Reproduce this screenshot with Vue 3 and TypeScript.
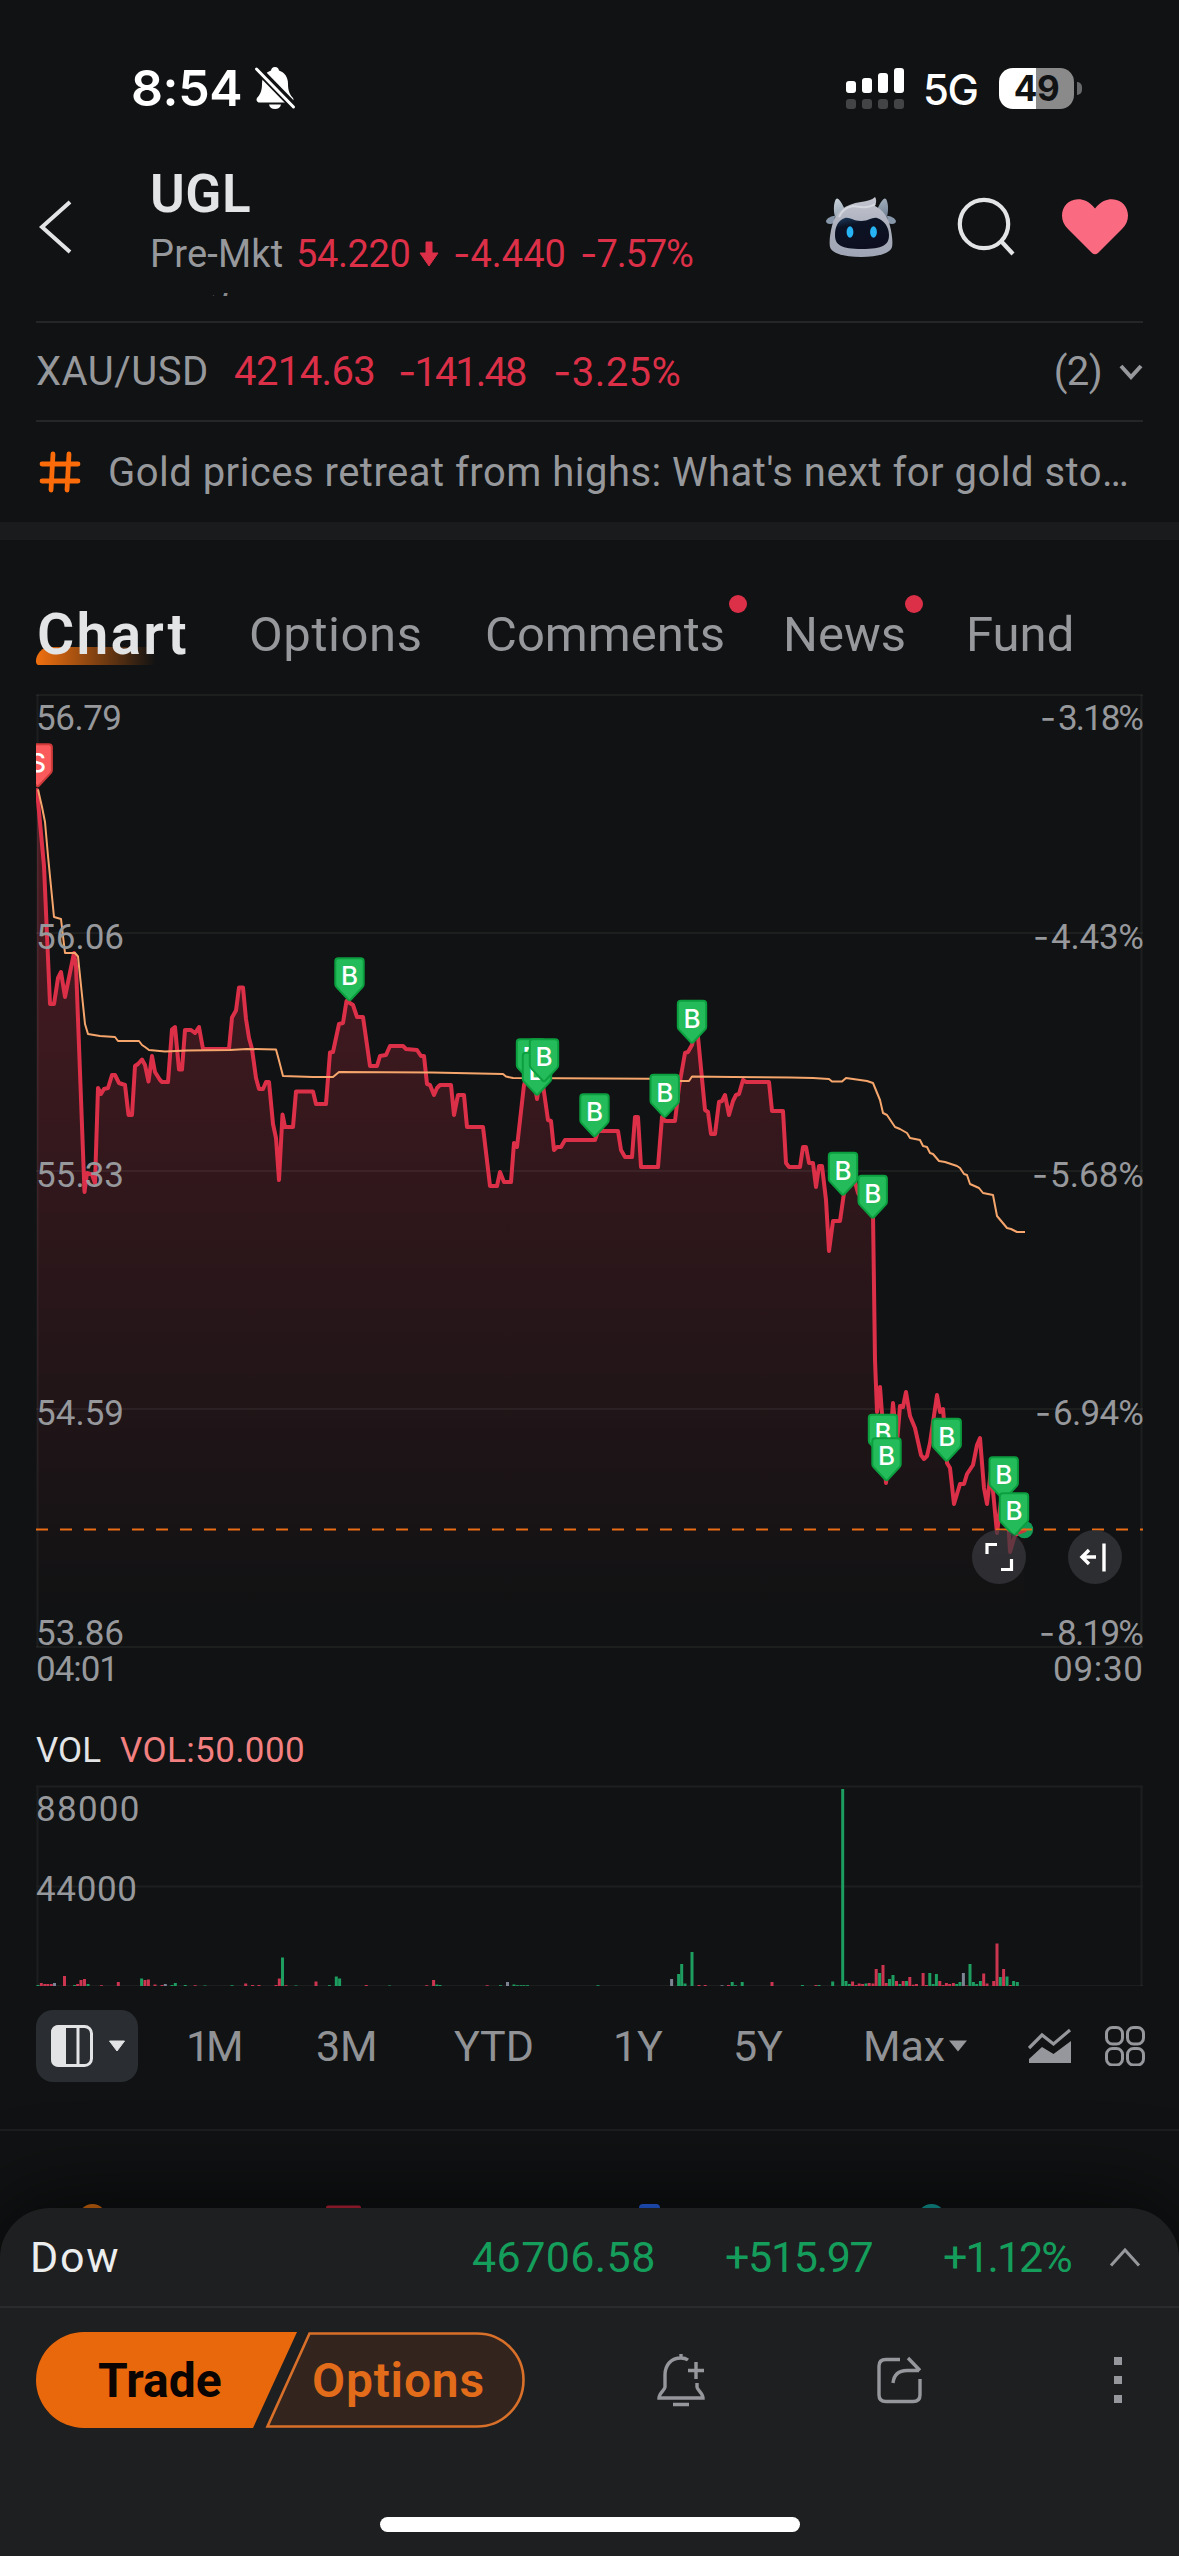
<script setup lang="ts">
import { h } from 'vue'

// Number text whose leading sign is set in a wider dash
const Num = (props: { v: string }) =>
  h('span', { class: 'num' }, props.v.startsWith('-') ? [h('span', { class: 'dash' }, '-'), props.v.slice(1)] : props.v)
Num.props = ['v']

const tabs = [
  { name: 'Chart', dot: 0, w: 213 },
  { name: 'Options', dot: 0, w: 236 },
  { name: 'Comments', dot: -22, w: 298 },
  { name: 'News', dot: -17, w: 183 },
  { name: 'Fund', dot: 0, w: 130 },
]

const price =
  '37,790 44,866 50,1004 54,1004 58,978 61,972 65,997 74,953 76,966 84.5,1192 87,1173 92,1174.5 95,1183 98,1088 101,1094 104,1089 108,1088 112,1075 115,1075 119,1083 125,1085 128.5,1115 132,1115 135,1066 138,1064 142,1059.5 145,1065 148.5,1081.5 152,1056 155,1072 160,1080 162,1082 168,1082 172,1029.5 175,1027 179,1069.5 182,1069.5 185,1030 191,1030 195,1033 199,1027 203,1049 229,1049 232,1017.5 236,1010.5 239,987.5 243,987.5 246,1019 249,1038 252,1049 256,1078 259,1089 263,1089 266,1082 269,1082 273,1124 276,1138 279,1180 282.5,1114.5 285,1127 293,1127 296,1091.5 313,1091.5 316,1104 326,1104 330,1052.5 333,1052 339,1024 343,1023 346.5,1001 353,1005 357,1017 363,1017 370,1066 377,1066 380,1056 386,1055 390,1046 403,1046 406,1049 417,1050 421,1056 424,1056 427,1084 430,1085 434,1095 437,1088 440,1085 451,1085 454,1115 458,1095 464,1095 467,1127 483,1127 490,1186 497,1186 500,1172 504,1182 511,1182 514,1143 517,1147 524,1085 528,1072 533,1073 537,1099 541,1073 544,1092 548,1120 551,1121 554,1150 557,1147 561,1147 565,1140 595,1140 598,1131 618,1131 621,1150 625,1157 632,1157 635,1117 638,1117 641,1167 658,1167 662,1117 665,1121 675,1121 679,1087 685,1053 688,1052 692,1045 695,1030 698,1037 705,1110 708,1112 711,1134 715,1134 719,1102 722,1101 725,1095 729,1115 733,1101 736,1095 739,1094 743,1080 746,1082 769,1082 772,1111 783,1111 786,1163 789,1167 800,1167 803,1147 806,1147 809,1163 813,1163 816,1187 819,1166 822,1166 826,1200 829,1251 833,1221 840,1221 844,1193 848,1180 855,1182 858,1193 863,1200 873,1213 875,1360 877,1412 880,1387 883,1427 886,1483 890,1443 893,1403 897,1443 900,1406 903,1407 906,1392 910,1416 915,1428 921,1455 924,1459 927,1456 930,1443 937,1395 940,1412 943,1409 946,1443 947,1463 950,1468 954,1504 960,1484 964,1484 967,1474 973,1465 977,1445 980,1438 984,1488 987,1504 991,1470 997,1533 1002,1493 1007,1500 1010,1552 1015,1535 1020,1533 1024,1530'
const area = `37,1647 ${price} 1024,1647`

const average =
  '38,789.5 42,807 45,822 48,856 54,917 61,919 65,953 75,953 78,956.5 85,1024 88,1034 100,1036 115,1037 118,1041 139,1041 142,1045 145,1047 149,1050 165,1051.5 187,1050.5 230,1050 247,1049 276,1049.5 279,1060.5 283,1076 313,1077 333,1077 339,1072 432,1072.5 503,1074 506,1076.5 513,1078 650,1078.7 679,1081 689,1081 692,1076.5 733,1077 790,1077.5 813,1078 829,1079 832,1081.5 842,1081.5 846,1078 867,1081 873,1083 880,1100 883,1113 887,1115 895,1127 900,1129 907,1133 910,1138 920,1140 923,1146 927,1147 930,1153 933,1154 939,1161 945,1162 957,1166 960,1168 964,1174 967,1175 970,1184 979,1188 983,1193 993,1195 997,1216 1007,1228 1011,1229 1017,1232 1025,1232'

const grid = [695, 933, 1171, 1409, 1647]

const leftLabels = [
  { t: '56.79', y: 729.5, w: 86 },
  { t: '56.06', y: 949, w: 88 },
  { t: '55.33', y: 1187, w: 88 },
  { t: '54.59', y: 1425, w: 88 },
  { t: '53.86', y: 1645, w: 88 },
  { t: '04:01', y: 1681, w: 83 },
]
const rightLabels = [
  { t: '3.18%', y: 729.5, x: 1058 },
  { t: '4.43%', y: 949, x: 1051 },
  { t: '5.68%', y: 1187, x: 1050 },
  { t: '6.94%', y: 1425, x: 1053 },
  { t: '8.19%', y: 1645, x: 1057 },
]

const markers: [number, number][] = [
  [349.5, 957.5], [531, 1038.5], [537, 1052], [544, 1038.5], [594.5, 1093.5], [664.7, 1074], [692, 1000],
  [843, 1152], [872.7, 1175], [883, 1414], [886.5, 1437.5], [946.7, 1418], [1003.7, 1456.5], [1014, 1492.5],
]
const pin = 'M-11,0.8 H11 Q14.2,0.8 14.2,4 V26.5 Q14.2,28.4 13,29.6 L1.2,42.2 Q0,43.2 -1.2,42.2 L-13,29.6 Q-14.2,28.4 -14.2,26.5 V4 Q-14.2,0.8 -11,0.8 Z'

type Bar = [number, number, 'r' | 'g' | 'n']
const volume: Bar[] = [
  [38, 1, 'g'], [41.3, 3, 'r'], [44.8, 2, 'r'], [47.8, 2, 'r'], [51.3, 2, 'r'], [54.5, 3, 'n'], [64.5, 10, 'r'], [74.6, 1, 'g'],
  [77.7, 2, 'r'], [81, 6, 'r'], [84.5, 7, 'r'], [88, 2, 'g'], [101.4, 0.8, 'r'], [118.3, 4, 'r'], [141.6, 7.5, 'g'], [145, 6, 'r'],
  [148.4, 6.5, 'r'], [155, 1.5, 'r'], [162, 1, 'r'], [165.3, 2, 'n'], [172, 1, 'g'], [175.3, 3, 'g'], [185.3, 1, 'g'], [195.2, 0.8, 'r'],
  [205, 0.5, 'g'], [232, 0.8, 'g'], [245.7, 2.5, 'r'], [252.6, 1, 'r'], [259, 1, 'r'], [276, 1, 'r'], [279.3, 7.5, 'r'], [282.5, 28.5, 'g'],
  [286, 0.8, 'r'], [296, 0.5, 'g'], [316, 4.5, 'r'], [329.5, 0.8, 'g'], [336.3, 9.5, 'g'], [339.6, 7.5, 'g'], [366.3, 1, 'r'],
  [389.6, 0.5, 'g'], [426.7, 0.8, 'r'], [433.6, 6, 'r'], [436.8, 1.4, 'g'], [440, 1, 'g'], [487.2, 0.8, 'r'], [500.5, 0.8, 'g'],
  [507.5, 4, 'n'], [514, 1.5, 'g'], [517.4, 0.8, 'g'], [521, 0.8, 'g'], [524, 0.8, 'g'], [527.5, 0.8, 'g'], [598, 0.8, 'g'],
  [671.6, 7, 'n'], [678.6, 12, 'g'], [681.7, 22, 'g'], [685, 2.5, 'g'], [692, 34, 'g'], [699, 1, 'r'], [705.2, 1, 'r'], [722, 0.7, 'n'],
  [728.5, 1, 'r'], [732.2, 4, 'g'], [735.5, 0.8, 'g'], [742.2, 4, 'g'], [772, 4, 'r'], [802.4, 1, 'g'], [816, 1, 'r'], [819, 1, 'g'],
  [832.7, 4.5, 'g'], [842.7, 197, 'g'], [846, 5, 'g'], [849.3, 2, 'g'], [852.6, 4.5, 'r'], [856, 1, 'r'], [859.2, 2.5, 'r'], [862.6, 2, 'r'],
  [866, 2.5, 'g'], [869.2, 3, 'r'], [873, 2.5, 'r'], [876.2, 17, 'r'], [879.6, 13, 'g'], [883, 21, 'r'], [886.2, 3, 'r'], [889.5, 7, 'g'],
  [893, 11, 'g'], [896.5, 5, 'r'], [899.9, 2, 'g'], [903.2, 5, 'r'], [906.5, 5, 'g'], [909.8, 9, 'r'], [913.2, 1.3, 'r'], [916.5, 2, 'r'],
  [923.1, 13, 'r'], [926.5, 1, 'r'], [929.8, 13, 'g'], [933.1, 2, 'g'], [936.4, 12, 'g'], [939.8, 5, 'r'], [943.1, 1, 'r'], [946.4, 3, 'r'],
  [949.7, 2, 'r'], [953.4, 3, 'r'], [956.7, 2, 'g'], [960, 4, 'g'], [963.4, 13, 'n'], [966.7, 0.6, 'r'], [970, 22, 'g'], [973.4, 4, 'g'],
  [976.7, 2, 'g'], [980.4, 5, 'g'], [983.7, 12.5, 'r'], [987, 2.5, 'r'], [993.7, 5, 'r'], [997, 42.5, 'r'], [1000.3, 9, 'g'],
  [1003.6, 17, 'r'], [1007, 9.5, 'g'], [1010.3, 1, 'r'], [1013.6, 5, 'g'], [1017.3, 4, 'g'],
]

const ranges = [
  { t: '1M', x: 186 },
  { t: '3M', x: 316 },
  { t: 'YTD', x: 454 },
  { t: '1Y', x: 613 },
  { t: '5Y', x: 733 },
]
const signal = [12, 15, 20, 25]
</script>

<template>
  <div class="screen">
    <div class="status">
      <span class="clock">8:54</span>
      <svg class="mute" width="42" height="44" viewBox="0 0 42 44">
        <path d="M21 1 C23.5 1 24.6 2.4 25 4.6 C31 6.8 34 11.5 34 18 C34 25 36 29 39 32 C40.2 34 39 36.5 36.5 36.5 H5.5 C3 36.5 1.8 34 3 32 C6 29 8 25 8 18 C8 11.5 11 6.8 17 4.6 C17.4 2.4 18.5 1 21 1 Z M15 38.5 H27 C26.5 41.5 24 43 21 43 C18 43 15.5 41.5 15 38.5 Z" fill="#fff" />
        <path d="M3.5 3 L40.5 41" stroke="#101213" stroke-width="8" />
        <path d="M2.5 3 L39.5 41" stroke="#fff" stroke-width="3" stroke-linecap="round" />
      </svg>
      <div class="signal">
        <div v-for="s in signal" :key="s" class="sig">
          <i class="bar" :style="{ height: s + 'px' }"></i><i class="nub"></i>
        </div>
      </div>
      <span class="net">5G</span>
      <div class="battery">49</div>
      <i class="cap"></i>
    </div>

    <header class="head">
      <svg class="back" width="36" height="54" viewBox="0 0 36 54"><path d="M33 2 L5 27 L33 52" fill="none" stroke="#e3e4e6" stroke-width="4" /></svg>
      <div class="title">
        <h1>UGL</h1>
        <div class="quote">
          <span class="mkt">Pre-Mkt</span>
          <Num v="54.220" class="q1" />
          <svg class="down" width="20" height="26" viewBox="0 0 20 26"><path d="M7 1 H13 V12 H19 L10 25 L1 12 H7 Z" fill="#dc2f48" stroke="#dc2f48" stroke-linejoin="round" /></svg>
          <Num v="-4.440" class="q2" />
          <Num v="-7.57%" class="q3" />
        </div>
      </div>
      <svg class="robot" width="72" height="62" viewBox="0 0 72 62">
        <defs>
          <linearGradient id="shell" x1="0" y1="0" x2="0" y2="1"><stop offset="0" stop-color="#c3c6d0" /><stop offset=".55" stop-color="#a9adba" /><stop offset="1" stop-color="#9fa5b5" /></linearGradient>
          <linearGradient id="horn" x1="0" y1="0" x2="1" y2="1"><stop offset="0" stop-color="#c9d3dc" /><stop offset="1" stop-color="#6f7f92" /></linearGradient>
          <linearGradient id="visor" x1="0" y1="0" x2=".4" y2="1"><stop offset="0" stop-color="#1f3f62" /><stop offset=".3" stop-color="#0c1324" /><stop offset="1" stop-color="#0d0f20" /></linearGradient>
        </defs>
        <path d="M11 3 C13 1 16 5 20 14 L10 21 C8 13 9 6 11 3 Z M61 3 C59 1 56 5 52 14 L62 21 C64 13 63 6 61 3 Z" fill="url(#horn)" />
        <path d="M10 20 C6 20 2 22 1 25 C1 28 5 29 9 27 Z M62 20 C66 20 70 22 71 25 C71 28 67 29 63 27 Z" fill="#8797a9" />
        <path d="M36 6 C42 5 47 4 50 1 C52 4 51 8 50 10 C58 14 63 21 65 30 C67 38 68 46 67 51 C65 58 51 61 36 61 C21 61 7 58 5 51 C4 46 5 38 7 30 C10 16 20 8 36 6 Z" fill="url(#shell)" />
        <path d="M28 10 C38 12 46 11 50 8 M14 21 C17 14 22 11 28 10" fill="none" stroke="#dfe2e8" stroke-width="2" opacity=".7" />
        <path d="M20 22 C25 21 28 25 36 25 C44 25 47 21 52 22 C59 24 64 31 64 39 C64 49 58 53 37 53 C16 53 10 49 10 39 C10 31 13 24 20 22 Z" fill="url(#visor)" />
        <ellipse cx="25" cy="36" rx="3.4" ry="5.8" fill="#27b4f5" /><ellipse cx="48.5" cy="36" rx="3.4" ry="5.8" fill="#27b4f5" />
      </svg>
      <svg class="search" width="60" height="62" viewBox="0 0 60 62"><circle cx="28" cy="28" r="24.2" fill="none" stroke="#e3e4e6" stroke-width="4.2" /><path d="M44.5 44.5 L57 58" stroke="#e3e4e6" stroke-width="4.2" /></svg>
      <svg class="heart" width="68" height="58" viewBox="0 0 68 58"><path d="M34 10.5 C28 2.5 21 1 17 1.2 C7 1.5 1 9 1 17.5 C1 23 3 27 7 31 L31 55 Q34 57.5 37 55 L61 31 C65 27 67 23 67 17.5 C67 9 61 1.5 51 1.2 C47 1 40 2.5 34 10.5 Z" fill="#fa6a80" /></svg>
    </header>

    <div class="peek"><span class="p0">Pre-Closing</span><span class="p1">54.220</span><span class="p2">4.440</span><span class="p3">7.57%</span><span class="p4">08:54 ET</span></div>
    <div class="row xau">
      <span>XAU/USD</span>
      <Num v="4214.63" class="x1" />
      <Num v="-141.48" class="x2" />
      <Num v="-3.25%" class="x3" />
      <span class="count">(2)</span>
      <svg width="24" height="16" viewBox="0 0 24 16"><path d="M2 2 L12 13 L22 2" fill="none" stroke="#96989c" stroke-width="4" /></svg>
    </div>
    <div class="row topic">
      <svg width="42" height="42" viewBox="0 0 42 42"><path d="M14 3 L12 39 M30 3 L28 39 M3 13 H39 M3 30 H39" fill="none" stroke="#fb6b0a" stroke-width="4.8" stroke-linecap="round" /></svg>
      <span>Gold prices retreat from highs: What's next for gold sto…</span>
    </div>
    <div class="band"></div>

    <nav class="tabs">
      <div v-for="(t, i) in tabs" :key="t.name" class="tab" :class="{ on: i === 0 }" :style="{ width: t.w + 'px' }">
        <span>{{ t.name }}<i v-if="t.dot" class="dot" :style="{ right: t.dot + 'px' }"></i></span>
      </div>
    </nav>

    <svg class="chart" width="1179" height="1031" viewBox="0 694 1179 1031">
      <defs>
        <linearGradient id="fill" gradientUnits="userSpaceOnUse" x1="0" y1="790" x2="0" y2="1625"><stop offset="0" stop-color="#de3249" stop-opacity=".3" /><stop offset="1" stop-color="#de3249" stop-opacity="0" /></linearGradient>
        <clipPath id="plot"><rect x="36" y="694" width="1107" height="960" /></clipPath>
      </defs>
      <polygon :points="area" fill="url(#fill)" />
      <g stroke="#fff" stroke-opacity=".055" stroke-width="2">
        <path v-for="y in grid" :key="y" :d="`M36 ${y} H1143`" />
        <path d="M37.5 695 V1647 M1141.5 695 V1647" />
      </g>
      <g clip-path="url(#plot)">
        <polyline :points="price" fill="none" stroke="#dc3049" stroke-width="4" stroke-linejoin="round" stroke-linecap="round" />
        <polyline :points="average" fill="none" stroke="#f6a66c" stroke-width="2" stroke-linejoin="round" />
      </g>
      <g class="axis">
        <text v-for="l in leftLabels" :key="l.t" x="36" :y="l.y" :textLength="l.w">{{ l.t }}</text>
        <g v-for="l in rightLabels" :key="l.t">
          <text :x="l.x - 18" :y="l.y" class="dash">-</text>
          <text :x="l.x" :y="l.y" :textLength="1144 - l.x">{{ l.t }}</text>
        </g>
        <text x="1053" y="1681" textLength="90">09:30</text>
      </g>
      <circle cx="1024.5" cy="1529.5" r="8.7" fill="#139c55" />
      <path d="M1018 1533 L1026 1530" stroke="#c23b3f" stroke-width="4" />
      <path d="M36 1529.5 H1143" stroke="#ea6c14" stroke-width="2.2" stroke-dasharray="12 12" />
      <g clip-path="url(#plot)" class="pins">
        <g transform="translate(37.7 743.5)"><path :d="pin" fill="#fa5a5c" stroke="#cf3a3a" stroke-width="2" /><text y="28">S</text></g>
        <g v-for="(m, i) in markers" :key="i" :transform="`translate(${m[0]} ${m[1]})`"><path :d="pin" fill="#24bb5b" stroke="#0c9f3f" stroke-width="2" /><text y="27.5">B</text></g>
      </g>
      <g>
        <circle cx="999" cy="1557" r="27" fill="#39393e" fill-opacity=".72" />
        <path d="M987 1554 V1544.5 H997 M1001 1569.5 H1011.5 V1559" fill="none" stroke="#fff" stroke-width="3.2" />
        <circle cx="1095" cy="1557" r="27" fill="#39393e" fill-opacity=".72" />
        <path d="M1096 1557 H1082 M1089 1550 L1082 1557 L1089 1564 M1104 1543.5 V1571.5" fill="none" stroke="#fff" stroke-width="3.4" />
      </g>
    </svg>

    <div class="legend"><span>VOL</span><span class="v">VOL:50.000</span></div>

    <svg class="chart" width="1179" height="214" viewBox="0 1776 1179 214">
      <g stroke="#fff" stroke-opacity=".055" stroke-width="2"><path d="M36 1786.5 H1143 M36 1886.5 H1143 M37.5 1786 V1986 M1141.5 1786 V1986" /><path d="M36 1985.5 H1143" stroke-width="1" /></g>
      <rect v-for="(b, i) in volume" :key="i" :x="b[0] - 1.5" :y="1986 - b[1]" width="3" :height="b[1]" :class="'bar-' + b[2]" />
      <g class="axis"><text x="36" y="1821" textLength="103.5">88000</text><text x="36" y="1901" textLength="101">44000</text></g>
    </svg>

    <div class="tools">
      <div class="mode">
        <svg width="42" height="42" viewBox="0 0 42 42"><path d="M8 0 H15 V42 H8 Q0 42 0 34 V8 Q0 0 8 0 Z" fill="#e3e4e6" /><rect x="1.5" y="1.5" width="39" height="39" rx="7" fill="none" stroke="#e3e4e6" stroke-width="3" /><path d="M27 1 V41" stroke="#e3e4e6" stroke-width="3" /></svg>
        <svg width="18" height="12" viewBox="0 0 18 12"><path d="M1.5 1 H16.5 L9 11 Z" fill="#e3e4e6" stroke="#e3e4e6" stroke-linejoin="round" /></svg>
      </div>
      <div class="ranges">
        <span v-for="(r, i) in ranges" :key="r.t" :style="{ width: (ranges[i + 1]?.x ?? 863) - r.x + 'px' }">{{ r.t }}</span>
        <span class="max">Max</span>
        <svg width="18" height="12" viewBox="0 0 18 12"><path d="M0 .5 H18 L9 11.5 Z" fill="#96989c" /></svg>
      </div>
      <svg class="areaicon" width="44" height="36" viewBox="0 0 44 36"><path d="M1 20 L14 7 L25.5 16 L42 2" fill="none" stroke="#96979c" stroke-width="3.2" /><path d="M1 35 V31 L14 19 L25.5 26 L43 13 V35 Z" fill="#96979c" /></svg>
      <svg width="40" height="40" viewBox="0 0 40 40" fill="none" stroke="#96979c" stroke-width="3"><rect x="1.5" y="1.5" width="16" height="16.5" rx="6" /><rect x="22.5" y="1.5" width="16" height="16.5" rx="6" /><rect x="1.5" y="22.5" width="16" height="16.5" rx="6" /><rect x="22.5" y="22.5" width="16" height="16.5" rx="6" /></svg>
    </div>

    <div class="below">
      <svg width="1179" height="77" viewBox="0 2131 1179 77">
        <circle cx="92.5" cy="2218" r="12" fill="none" stroke="#e87410" stroke-width="4" />
        <rect x="326" y="2205.5" width="35" height="12" rx="2" fill="#d0263f" />
        <rect x="639" y="2204" width="21" height="14" rx="4" fill="#2a6cff" />
        <circle cx="931.5" cy="2218" r="12" fill="none" stroke="#12aaa8" stroke-width="4" />
      </svg>
    </div>

    <footer class="sheet">
      <div class="index">
        <span class="name">Dow</span>
        <span class="i1">46706.58</span><span class="i2">+515.97</span><span class="i3">+1.12%</span>
        <svg width="32" height="20" viewBox="0 0 32 20"><path d="M2 18.5 L16 3 L30 18.5" fill="none" stroke="#96989c" stroke-width="3" /></svg>
      </div>
      <div class="actions">
        <div class="pill">
          <svg width="490" height="96" viewBox="0 0 490 96"><path d="M48 0 H261 L217 96 H48 A48 48 0 0 1 48 0 Z" fill="#ea680c" /><path d="M273.5 1.5 H441 A46.5 46.5 0 0 1 441 94.5 H231.5 Z" fill="#33251e" stroke="#d9702a" stroke-width="2.6" /></svg>
          <span class="trade">Trade</span><span class="opts">Options</span>
        </div>
        <svg class="bell" width="48" height="54" viewBox="0 0 48 54"><path d="M24 1 V5 M31 7 C29 5.5 26.5 5 24 5 C14 5 8 12 8 22 V34 C8 37 2 40 2 45 H46 C46 40 40 37 40 34 V30 M31 17.5 H47 M39 9 V26 M16 51.5 H32" fill="none" stroke="#96979c" stroke-width="3.4" /></svg>
        <svg class="share" width="48" height="50" viewBox="0 0 48 50"><path d="M24 4.5 H10 Q3 4.5 3 11 V40 Q3 46.5 10 46.5 H37 Q44 46.5 44 40 V24" fill="none" stroke="#96979c" stroke-width="3.4" /><path d="M17 28 C18 19 23 15.5 31 15.5 H43 M32 3 L44 15.5" fill="none" stroke="#96979c" stroke-width="3.4" /></svg>
        <div class="more"><i></i><i></i><i></i></div>
      </div>
      <div class="home"></div>
    </footer>
  </div>
</template>

<style scoped>
.screen { width: 1179px; height: 2556px; overflow: hidden; background: #101213; color: #96989c; font-family: Roboto, "Noto Sans", sans-serif; display: flex; flex-direction: column; white-space: nowrap; }
.screen > * { flex: none; }
svg { display: block; flex: none; }
h1 { margin: 0; }

.status { height: 176px; display: flex; align-items: center; color: #fff; font-family: Inter, sans-serif; }
.clock { margin-left: 131px; width: 123px; font-size: 50px; font-weight: 600; letter-spacing: -.4px; }
.signal { margin-left: 550px; display: flex; gap: 6px; align-items: flex-end; }
.sig { display: flex; flex-direction: column; gap: 6px; }
.bar { display: block; width: 10px; background: #fff; border-radius: 3px; }
.nub { display: block; width: 10px; height: 10px; background: #434446; border-radius: 3px; }
.net { margin-left: 19px; width: 76px; font-size: 42px; font-weight: 500; letter-spacing: -1.5px; padding-top: 2px; }
.battery { width: 75px; height: 41px; border-radius: 14px; background: linear-gradient(90deg, #fff 37px, #8a8a8b 37px); color: #101213; font-size: 35px; font-weight: 700; line-height: 41px; text-align: center; letter-spacing: -.5px; }
.cap { width: 5px; height: 13px; margin-left: 3px; background: #68696a; border-radius: 0 6px 6px 0; }

.head { height: 117px; padding-bottom: 15px; box-sizing: border-box; display: flex; align-items: center; }
.back { margin-left: 37px; }
.title { margin-left: 77px; width: 673px; margin-top: -7px; }
h1 { font-size: 53px; line-height: 62px; height: 60px; font-weight: 600; color: #e3e4e6; letter-spacing: .5px; }
.quote { display: flex; align-items: center; font-size: 38px; line-height: 60px; color: #dc2f48; }
.mkt { width: 146px; color: #96989c; letter-spacing: .2px; }
.q1 { width: 123px; letter-spacing: -.4px; }
.down { margin-right: 14px; }
.q2 { width: 127px; }
.q3 { letter-spacing: -1.1px; }
.robot { margin-left: 2px; }
.search { margin-left: 59px; }
.heart { margin-left: 45px; }

.peek { height: 28px; overflow: hidden; display: flex; font-size: 38px; line-height: 44px; }
.peek > span { margin-top: -35px; color: #88898c; height: 38px; overflow: hidden; box-sizing: border-box; }
.p0 { margin-left: 36px; width: 221px; }
.peek > .p1, .peek > .p2, .peek > .p3 { color: #7a2b38; }
.p1 { width: 173px; }
.p2 { width: 140px; }
.p3 { width: 373px; }

.row { margin: 0 36px; height: 99px; box-sizing: border-box; border-top: 2px solid #242628; display: flex; align-items: center; font-size: 40px; }
.xau > span:first-child { width: 198px; letter-spacing: .5px; }
.x1, .x2, .x3 { color: #dc2f48; }
.x1 { width: 164px; letter-spacing: -.6px; }
.x2 { width: 155px; letter-spacing: -2px; }
.x3 { width: 466px; letter-spacing: .4px; }
.count { text-align: right; flex: 1; margin-right: 17px; letter-spacing: -.6px; }
.topic { height: 102px; }
.topic svg { margin-left: 3px; margin-right: 27px; }
.topic span { letter-spacing: .48px; }
.band { height: 18px; background: #191b1c; }

.tabs { height: 154px; padding: 61px 0 0 36px; box-sizing: border-box; display: flex; font-size: 49px; line-height: 68px; }
.tab span { position: relative; }
.tab:nth-child(2) span { letter-spacing: .6px; }
.tab.on span { display: block; font-size: 57px; font-weight: 600; color: #e3e4e6; padding-left: 1px; z-index: 0; letter-spacing: 2.2px; }
.on span::before { content: ""; position: absolute; z-index: -1; left: 0; top: 46px; width: 120px; height: 18px; border-radius: 16px 0 0 4px; background: linear-gradient(90deg, #f0700f, rgba(240, 112, 15, 0)); }
.dot { position: absolute; top: -11px; width: 18px; height: 18px; border-radius: 50%; background: #dc2f48; }

.chart text { font-size: 35px; }
.axis text { fill: #96989c; }
.pins text { font: 500 26px Inter, sans-serif; fill: #fff; text-anchor: middle; }
.bar-r { fill: #cc3550; }
.bar-g { fill: #1d9d60; }
.bar-n { fill: #7c8494; }

.legend { height: 51px; padding-left: 36px; display: flex; align-items: center; font-size: 35px; color: #e3e4e6; }
.legend span:first-child { width: 84px; }
.v { color: #f38080; letter-spacing: .4px; }

.tools { height: 139px; padding: 0 34px 27px 36px; box-sizing: border-box; display: flex; align-items: center; }
.mode { width: 102px; height: 72px; border-radius: 17px; background: #2a2d31; display: flex; align-items: center; gap: 15px; padding-left: 15px; box-sizing: border-box; }
.ranges { margin-left: 48px; width: 843px; display: flex; align-items: center; font-size: 43px; color: #909296; }
.ranges span:first-child { letter-spacing: -4px; }
.ranges .max { width: 86px; }
.areaicon { margin-right: 33px; }

.below { height: 79px; border-top: 2px solid #1c1e20; box-sizing: border-box; }
.sheet { position: relative; height: 348px; border-radius: 50px 50px 0 0; background: #1d1f21; box-shadow: 0 0 90px rgba(0, 0, 0, .75); }
.index { height: 100px; box-sizing: border-box; display: flex; align-items: center; font-size: 43px; color: #159e5b; border-bottom: 2px solid #292b2d; }
.name { color: #eceded; margin-left: 30px; width: 442px; letter-spacing: 1.8px; }
.i1 { width: 253px; letter-spacing: .4px; }
.i2 { width: 218px; letter-spacing: -1.3px; }
.i3 { width: 166px; letter-spacing: -2px; }
.actions { height: 144px; display: flex; align-items: center; }
.pill { position: relative; margin-left: 36px; font-size: 48px; font-weight: 600; line-height: 98px; }
.trade { position: absolute; left: 62px; top: 0; color: #0a0502; font-weight: 700; }
.opts { position: absolute; left: 276px; top: 0; color: #e36c1a; letter-spacing: .8px; }
.bell { margin-left: 131px; }
.share { margin-left: 171px; }
.more { margin-left: 190px; display: flex; flex-direction: column; gap: 11px; }
.more i { width: 8px; height: 8px; background: #96979c; }
.home { margin: 65px auto 0; width: 420px; height: 15px; border-radius: 8px; background: #fff; }
</style>

<style>
body { background: #101213; }
.dash { font-family: Inter, sans-serif; }
</style>
